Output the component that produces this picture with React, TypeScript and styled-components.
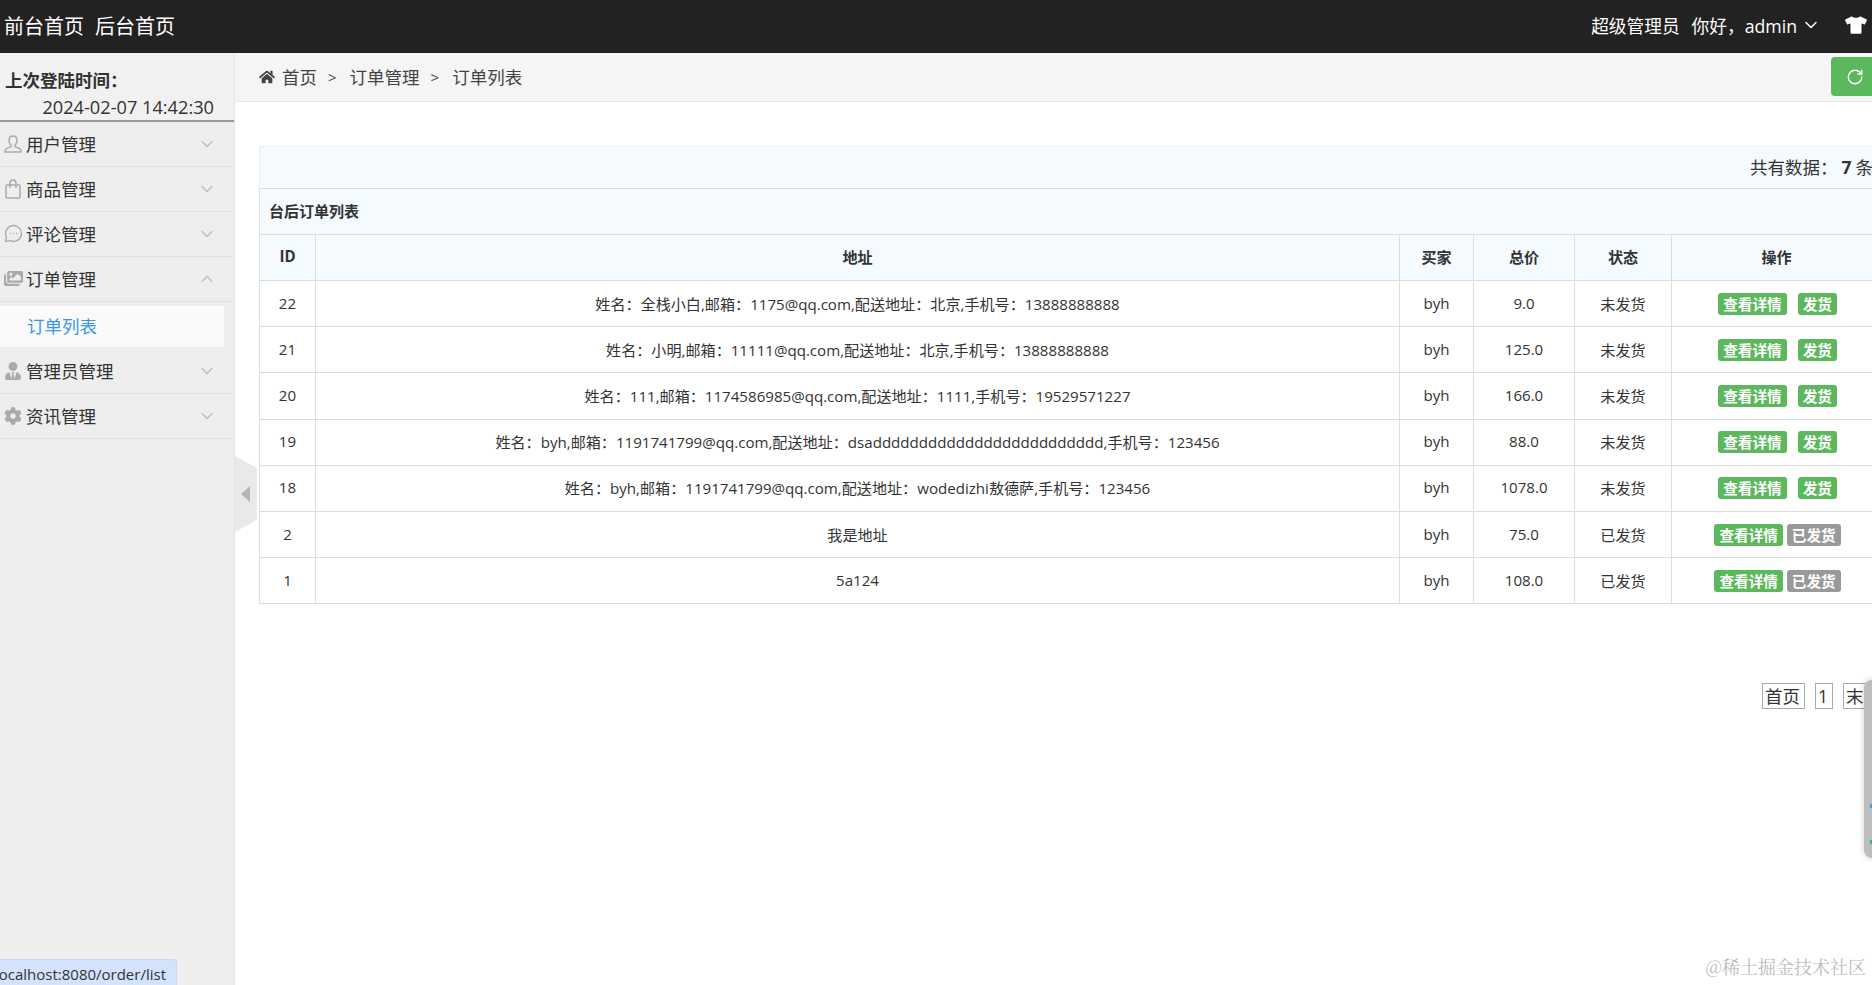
import styled, { createGlobalStyle } from 'styled-components';
import { FaHome, FaTshirt, FaCog, FaUserTie, FaImages } from 'react-icons/fa';
import { ChevronDown, ChevronUp, MessageCircleMore, RotateCw } from 'lucide-react';
import type { ComponentType, ReactNode } from 'react';

const GlobalStyle = createGlobalStyle`
    html, body {
        margin: 0;
        padding: 0;
        background: #FFF;
    }
    body {
        font-family: "Open Sans", "Noto Sans CJK SC", sans-serif;
        color: #333;
    }
    * {
        box-sizing: border-box;
    }
`;

const Page = styled.div`
    position: relative;
    width: 1872px;
    height: 985px;
    overflow: hidden;
    display: flex;
    flex-direction: column;
`;

const TopBar = styled.header`
    height: 53px;
    flex: none;
    background: #222;
    color: #FFF;
    display: flex;
    align-items: center;
    padding: 0 5px 2px 4px;
`;

const TopLink = styled.a`
    font-size: 20px;
    margin-right: 11px;
`;

const UserArea = styled.div`
    margin-left: auto;
    display: flex;
    align-items: center;
    padding-bottom: 2px;
    font-size: 17.7px;
`;

const UserName = styled.span`
    margin: 0 4px 0 12px;
`;

const Shirt = styled(FaTshirt)`
    margin-left: 24px;
    font-size: 22px;
`;

const Body = styled.div`
    flex: 1;
    display: flex;
    min-height: 0;
`;

const Sidebar = styled.aside`
    width: 235px;
    flex: none;
    background: #EEE;
    border-right: 1px solid #E5E5E5;
`;

const LastLogin = styled.div`
    height: 69px;
    padding: 13px 20px 0 5px;
    background: #F1F1F1;
    border-bottom: 2px solid #999;
`;

const LoginLabel = styled.div`
    font-size: 17.5px;
    font-weight: 700;
    line-height: 28px;
`;

const LoginDate = styled.div`
    font-size: 18.2px;
    line-height: 26px;
    text-align: right;
`;

const MenuRow = styled.div`
    height: 45px;
    display: flex;
    align-items: center;
    padding: 0 15px 1px 3px;
    margin-right: 2px;
    border-bottom: 1px solid #E0E0E0;
    font-size: 17.5px;
`;

const MenuIcon = styled.span`
    width: 20px;
    margin-right: 3px;
    display: flex;
    justify-content: center;
    color: #AAA;
`;

const MenuArrow = styled.span`
    margin-left: auto;
    display: flex;
    color: #BBB;
`;

const SubItem = styled.div<{ $active?: boolean }>`
    height: 41px;
    margin: 4px 10px 2px 0;
    padding-left: 27px;
    line-height: 41px;
    font-size: 17.5px;
    background: ${props => (props.$active ? '#FAFAFA' : 'transparent')};
    color: #3B97E3;
`;

const Main = styled.main`
    flex: 1;
    min-width: 0;
    overflow: hidden;
`;

const Inner = styled.div`
    width: 1651px;
`;

const Breadcrumb = styled.nav`
    height: 49px;
    width: 1646px;
    display: flex;
    align-items: center;
    padding-left: 24px;
    padding-bottom: 1px;
    background: #F5F5F5;
    border-bottom: 1px solid #E8E8E8;
    font-size: 17.5px;
    color: #444;
`;

const Crumb = styled.span`
    margin-left: 7px;
`;

const CrumbSep = styled.span`
    margin: 0 13px 0 11px;
    font-size: 15px;
`;

const RefreshButton = styled.button`
    margin-left: auto;
    width: 50px;
    height: 39px;
    padding: 0 3px 0 0;
    border: 0;
    border-radius: 4px;
    background: #5CB85C;
    color: #FFF;
    display: flex;
    align-items: center;
    justify-content: center;
`;

const Content = styled.section`
    padding: 44px 0 0 24px;
`;

const Toolbar = styled.div`
    width: 1622px;
    height: 42px;
    display: flex;
    align-items: center;
    justify-content: flex-end;
    padding: 0 8px 2px 0;
    background: #F5FAFE;
    border-top: 1px solid #EEE;
    border-left: 1px solid #EEE;
    font-size: 17.5px;
`;

const Total = styled.strong`
    margin: 0 4px 0 4px;
`;

const Table = styled.table`
    width: 1622px;
    table-layout: fixed;
    border-collapse: collapse;
    font-size: 15.1px;
`;

const Caption = styled.th`
    height: 46px;
    padding: 0 0 2px 9px;
    text-align: left;
    font-size: 15px;
    font-weight: 700;
    background: #F5FAFE;
    border: 1px solid #DDD;
`;

const HeadCell = styled.th`
    height: 46px;
    padding: 0 0 3px;
    font-weight: 700;
    background: #F5FAFE;
    border: 1px solid #DDD;
`;

const Cell = styled.td`
    height: 46.2px;
    padding: 0 0 2px;
    text-align: center;
    background: #FFF;
    border: 1px solid #DDD;
`;

const ActionCell = styled(Cell)`
    padding: 0 0 0 2px;
`;

const Badge = styled.span<{ $muted?: boolean }>`
    display: inline-block;
    padding: 0 5px;
    height: 22px;
    line-height: 22px;
    margin: 0 5.5px;
    margin-left: ${props => (props.$muted ? '-1.5px' : '5.5px')};
    border-radius: 3px;
    font-size: 14.6px;
    font-weight: 700;
    color: #FFF;
    background: ${props => (props.$muted ? '#999' : '#5CB85C')};
`;

const Pager = styled.div`
    display: flex;
    justify-content: flex-end;
    gap: 10px;
    margin-top: 79px;
`;

const PageLink = styled.a`
    height: 26px;
    padding: 0 4px 0 2px;
    line-height: 24px;
    font-size: 17.5px;
    background: #FFF;
    border: 1px solid #AAA;
`;

const CollapseHandle = styled.div`
    position: absolute;
    left: 235px;
    top: 456px;
    width: 22px;
    height: 76px;
    display: flex;
    align-items: center;
    background: #E9E9E9;
    clip-path: polygon(0 0, 100% 16%, 100% 84%, 0 100%);
`;

const HandleArrow = styled.i`
    margin-left: 6px;
    border-style: solid;
    border-width: 8px 9px 8px 0;
    border-color: transparent #B5B5B5 transparent transparent;
`;

const SidePanel = styled.div`
    position: absolute;
    left: 1864px;
    top: 680px;
    width: 20px;
    height: 178px;
    border-radius: 8px;
    background: #BDBDBD;
    box-shadow: 0 0 6px rgba(0, 0, 0, 0.2);
`;

const PanelMark = styled.i<{ $top: number; $color: string }>`
    position: absolute;
    left: 6px;
    top: ${props => props.$top}px;
    width: 4px;
    height: 4px;
    background: ${props => props.$color};
`;

const StatusBubble = styled.div`
    position: absolute;
    left: 0;
    bottom: 0;
    width: 177px;
    height: 26px;
    overflow: hidden;
    direction: rtl;
    border-top-right-radius: 4px;
    background: #D3E3FD;
    border-top: 1px solid #C8D8F0;
    border-right: 1px solid #C8D8F0;
    padding-right: 10px;
    font-size: 15px;
    line-height: 28px;
    white-space: nowrap;
`;

const Watermark = styled.div`
    position: absolute;
    right: 6px;
    bottom: 6px;
    font-family: "Noto Serif CJK SC", "Liberation Serif", "Noto Sans CJK SC", serif;
    font-size: 18px;
    color: #BBB;
`;

const PersonOutline = () => (
    <svg width="20" height="20" viewBox="0 0 20 20" fill="none" stroke="currentColor" strokeWidth="1.5">
        <path d="M10 2c-2.4 0-4 2-4 4.6 0 2 .9 3.6 2 4.6v1.4c-1.6.8-6 1.8-6 4.2v1.2h16v-1.2c0-2.4-4.4-3.4-6-4.2v-1.4c1.1-1 2-2.6 2-4.6C14 4 12.4 2 10 2z" />
    </svg>
);

const Bag = () => (
    <svg width="20" height="20" viewBox="0 0 20 20" fill="none" stroke="currentColor" strokeWidth="1.5">
        <rect x="3" y="6" width="14" height="13" rx="1" />
        <path d="M7 9V4c0-1.6 1.3-3 3-3s3 1.4 3 3v5" />
    </svg>
);

type MenuItemProps = { icon: ReactNode; label: string; open?: boolean };

const MenuItem = ({ icon, label, open }: MenuItemProps) => {
    const Arrow: ComponentType<{ size: number; strokeWidth: number }> = open ? ChevronUp : ChevronDown;
    return (
        <MenuRow>
            <MenuIcon>{icon}</MenuIcon>
            {label}
            <MenuArrow><Arrow size={20} strokeWidth={1.5} /></MenuArrow>
        </MenuRow>
    );
};

const ORDERS = [
    { id: 22, address: '姓名：全栈小白,邮箱：1175@qq.com,配送地址：北京,手机号：13888888888', total: '9.0', shipped: false },
    { id: 21, address: '姓名：小明,邮箱：11111@qq.com,配送地址：北京,手机号：13888888888', total: '125.0', shipped: false },
    { id: 20, address: '姓名：111,邮箱：1174586985@qq.com,配送地址：1111,手机号：19529571227', total: '166.0', shipped: false },
    { id: 19, address: '姓名：byh,邮箱：1191741799@qq.com,配送地址：dsaddddddddddddddddddddddddd,手机号：123456', total: '88.0', shipped: false },
    { id: 18, address: '姓名：byh,邮箱：1191741799@qq.com,配送地址：wodedizhi敖德萨,手机号：123456', total: '1078.0', shipped: false },
    { id: 2, address: '我是地址', total: '75.0', shipped: true },
    { id: 1, address: '5a124', total: '108.0', shipped: true }
];

const App = () => (
    <Page>
        <GlobalStyle />
        <TopBar>
            <TopLink>前台首页</TopLink>
            <TopLink>后台首页</TopLink>
            <UserArea>
                超级管理员
                <UserName>你好，admin</UserName>
                <ChevronDown size={20} strokeWidth={1.75} />
                <Shirt />
            </UserArea>
        </TopBar>
        <Body>
            <Sidebar>
                <LastLogin>
                    <LoginLabel>上次登陆时间：</LoginLabel>
                    <LoginDate>2024-02-07 14:42:30</LoginDate>
                </LastLogin>
                <MenuItem icon={<PersonOutline />} label="用户管理" />
                <MenuItem icon={<Bag />} label="商品管理" />
                <MenuItem icon={<MessageCircleMore size={19} strokeWidth={1.75} />} label="评论管理" />
                <MenuItem icon={<FaImages size={19} />} label="订单管理" open />
                <SubItem $active>订单列表</SubItem>
                <MenuItem icon={<FaUserTie size={18} />} label="管理员管理" />
                <MenuItem icon={<FaCog size={18} />} label="资讯管理" />
            </Sidebar>
            <Main>
                <Inner>
                    <Breadcrumb>
                        <FaHome size={16} />
                        <Crumb>首页</Crumb>
                        <CrumbSep>&gt;</CrumbSep>
                        <span>订单管理</span>
                        <CrumbSep>&gt;</CrumbSep>
                        <span>订单列表</span>
                        <RefreshButton><RotateCw size={18} strokeWidth={1.75} /></RefreshButton>
                    </Breadcrumb>
                    <Content>
                        <Toolbar>
                            共有数据：<Total>7</Total>条
                        </Toolbar>
                        <Table>
                            <colgroup>
                                <col width={56} />
                                <col width={1084} />
                                <col width={74} />
                                <col width={101} />
                                <col width={97} />
                                <col width={210} />
                            </colgroup>
                            <thead>
                                <tr><Caption colSpan={6}>台后订单列表</Caption></tr>
                                <tr>
                                    <HeadCell>ID</HeadCell>
                                    <HeadCell>地址</HeadCell>
                                    <HeadCell>买家</HeadCell>
                                    <HeadCell>总价</HeadCell>
                                    <HeadCell>状态</HeadCell>
                                    <HeadCell>操作</HeadCell>
                                </tr>
                            </thead>
                            <tbody>
                                {ORDERS.map(order => (
                                    <tr key={order.id}>
                                        <Cell>{order.id}</Cell>
                                        <Cell>{order.address}</Cell>
                                        <Cell>byh</Cell>
                                        <Cell>{order.total}</Cell>
                                        <Cell>{order.shipped ? '已发货' : '未发货'}</Cell>
                                        <ActionCell>
                                            <Badge>查看详情</Badge>
                                            {order.shipped ? <Badge $muted>已发货</Badge> : <Badge>发货</Badge>}
                                        </ActionCell>
                                    </tr>
                                ))}
                            </tbody>
                        </Table>
                        <Pager>
                            <PageLink>首页</PageLink>
                            <PageLink>1</PageLink>
                            <PageLink>末页</PageLink>
                        </Pager>
                    </Content>
                </Inner>
            </Main>
        </Body>
        <CollapseHandle><HandleArrow /></CollapseHandle>
        <SidePanel>
            <PanelMark $top={124} $color="#4A9BD8" />
            <PanelMark $top={160} $color="#2BB88A" />
        </SidePanel>
        <StatusBubble>localhost:8080/order/list</StatusBubble>
        <Watermark>@稀土掘金技术社区</Watermark>
    </Page>
);

export default App;
